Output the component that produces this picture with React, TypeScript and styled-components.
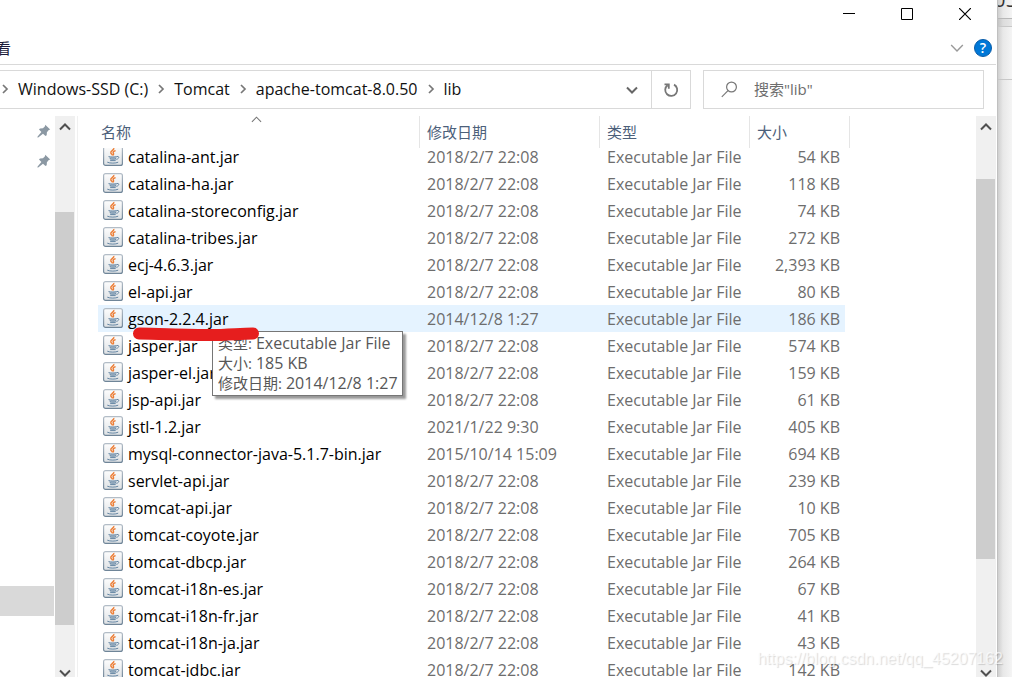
import React from "react";
import styled, { createGlobalStyle } from "styled-components";

const GlobalStyle = createGlobalStyle`
  * { box-sizing: border-box; }
  body { margin: 0; background: #fff; overflow: hidden; }
  body, button, input { font-family: "Open Sans", "Noto Sans CJK SC", sans-serif; font-size: 15px; }
  button { padding: 0; border: 0; background: transparent; display: flex; align-items: center; justify-content: center; }
  svg { display: block; flex: none; }
`;

const Desktop = styled.div`
  position: relative;
  display: flex;
  height: 100vh;
  overflow: hidden;
`;

const ExplorerWindow = styled.main`
  flex: 1;
  min-width: 0;
  display: flex;
  flex-direction: column;
  padding-right: 1px;
  background: #fff;
`;

const TitleBar = styled.header`
  display: flex;
  justify-content: flex-end;
  height: 28px;
  padding-right: 2px;
`;

const CaptionButton = styled.button`
  width: 58px;
`;

const MenuBar = styled.nav`
  display: flex;
  align-items: center;
  justify-content: space-between;
  height: 37px;
  padding: 3px 4px 0 0;
  border-bottom: 1px solid #d9d9d9;
`;

const MenuButton = styled.button`
  margin-left: -4px;
  color: #1b1b3a;
`;

const MenuTools = styled.div`
  display: flex;
  align-items: center;
  gap: 10px;
`;

const HelpButton = styled.button`
  width: 18px;
  height: 18px;
  border: 1px solid #0a5ca8;
  border-radius: 50%;
  background: #0078d7;
  color: #fff;
  font-size: 14px;
  font-weight: 600;
  line-height: 16px;
`;

const NavRow = styled.div`
  display: flex;
  gap: 12px;
  padding: 5px 12px 7px 0;
`;

const AddressBar = styled.div`
  flex: 1;
  min-width: 0;
  display: flex;
  height: 39px;
  border: 1px solid #d9d9d9;
  border-left: 0;
`;

const Crumbs = styled.div`
  flex: 1;
  display: flex;
  align-items: center;
  gap: 9px;
  padding: 0 0 1px 1px;
  font-size: 16px;
  white-space: nowrap;
`;

const Crumb = styled.a`
  color: #111;
  text-decoration: none;
`;

const BarButton = styled.button<{ $divided?: boolean }>`
  width: 39px;
  border-left: ${(p) => (p.$divided ? "1px solid #d9d9d9" : "0")};
`;

const SearchBox = styled.label`
  display: flex;
  align-items: center;
  gap: 16px;
  width: 281px;
  height: 39px;
  padding: 0 0 1px 17px;
  border: 1px solid #d9d9d9;
`;

const SearchInput = styled.input`
  flex: 1;
  min-width: 0;
  padding: 0;
  border: 0;
  outline: 0;
  background: transparent;
  &::placeholder { color: #6d6d6d; opacity: 1; }
`;

const Body = styled.div`
  flex: 1;
  min-height: 0;
  display: flex;
`;

const NavPane = styled.aside`
  width: 55px;
  display: flex;
  flex-direction: column;
  justify-content: space-between;
  padding: 8px 0 61px;
`;

const Pins = styled.div`
  display: flex;
  flex-direction: column;
  align-items: flex-end;
  gap: 16px;
  padding-right: 4px;
`;

const SelectedFolder = styled.div`
  height: 30px;
  margin-right: 1px;
  background: #d9d9d9;
`;

const ScrollTrack = styled.div`
  width: 20px;
  display: flex;
  flex-direction: column;
  background: #f0f0f0;
`;

const ScrollButton = styled.button<{ $height: number }>`
  height: ${(p) => p.$height}px;
  padding-right: 1px;
`;

const ScrollRail = styled.div<{ $before: number; $after: number }>`
  flex: 1;
  display: flex;
  padding: ${(p) => p.$before}px 1px ${(p) => p.$after}px 0;
`;

const ScrollThumb = styled.div`
  flex: 1;
  background: #cdcdcd;
`;

const FilePane = styled.section`
  flex: 1;
  min-width: 0;
  overflow: hidden;
  margin-left: 2px;
  padding-left: 20px;
  border-left: 1px solid #f0f0f0;
`;

const FileTable = styled.table`
  table-layout: fixed;
  width: 747px;
  border-collapse: collapse;
`;

const HeadCell = styled.th<{ $width: number }>`
  width: ${(p) => p.$width}px;
  height: 27px;
  padding: 0;
  vertical-align: top;
  font-weight: 400;
  text-align: left;
`;

/* The header is taller than its row and hides the top of the scrolled list. */
const HeadLabel = styled.div<{ $indent: number; $overhang?: boolean }>`
  position: relative;
  height: 32px;
  margin: 0 ${(p) => (p.$overhang ? "-5px" : "0")} -5px 0;
  padding-left: ${(p) => p.$indent}px;
  border-right: 1px solid #e5e5e5;
  background: #fff;
  color: #4c607a;
  line-height: 32px;
`;

const SortMark = styled.span`
  position: absolute;
  top: -2px;
  left: 50%;
  margin-left: -8px;
`;

const FileRow = styled.tr<{ $hot: boolean }>`
  height: 27px;
  background: ${(p) => (p.$hot ? "#e5f3ff" : "transparent")};
`;

const Cell = styled.td<{ $right?: boolean }>`
  padding: 2px 5px 0 7px;
  color: #6d6d6d;
  font-size: 16px;
  line-height: 25px;
  text-align: ${(p) => (p.$right ? "right" : "left")};
  white-space: nowrap;
`;

const NameCell = styled.td`
  padding: 0 0 0 5px;
`;

const FileName = styled.div`
  display: flex;
  align-items: flex-start;
  gap: 5px;
  height: 27px;
  padding-top: 2px;
  color: #000;
  font-size: 16px;
  line-height: 25px;
  white-space: nowrap;
  svg { margin-top: 1px; }
`;

const Tooltip = styled.dl`
  position: absolute;
  left: 212px;
  top: 331px;
  width: 191px;
  margin: 0;
  padding: 1px 5px 2px;
  border: 1px solid #767676;
  background: #fff;
  box-shadow: 3px 3px 2px rgba(0, 0, 0, 0.4);
  color: #575757;
  line-height: 20px;
  white-space: nowrap;
`;

const TipLine = styled.div`
  display: flex;
  gap: 4px;
  height: 20px;
`;

const TipTerm = styled.dt`
  font-size: 15px;
`;

const TipValue = styled.dd`
  margin: 0;
  font-size: 16px;
`;

const Marker = styled.svg`
  position: absolute;
  left: 130px;
  top: 322px;
`;

const Watermark = styled.div`
  position: absolute;
  right: 9px;
  bottom: 8px;
  color: rgba(255, 255, 255, 0.7);
  font-family: "Liberation Sans", sans-serif;
  font-size: 16px;
  line-height: 20px;
  text-shadow: 1px 1px 1px rgba(0, 0, 0, 0.15);
`;

const BehindWindow = styled.div`
  width: 15px;
  overflow: hidden;
  border-left: 1px solid #c0c0c0;
  background: linear-gradient(to right, #cfcfcf, #e8e8e8 5px, #f6f6f6 15px);
`;

const BehindTab = styled.div`
  height: 19px;
  border-bottom: 1px solid #b8b8b8;
  color: #333;
  font-size: 20px;
  line-height: 0;
  text-indent: -4px;
`;

const BehindBar = styled.div<{ $height: number; $shade?: boolean }>`
  height: ${(p) => p.$height}px;
  border-bottom: 1px solid #c8c8c8;
  background: ${(p) => (p.$shade ? "rgba(0, 0, 0, 0.05)" : "transparent")};
`;

const Chevron = ({ up, size = 12, width = 2, color = "#505050" }: { up?: boolean; size?: number; width?: number; color?: string }) => (
  <svg width={size} height={size} viewBox="0 0 12 12" fill="none" stroke={color} strokeWidth={width}>
    <path d={up ? "M1 8.5 6 3.5l5 5" : "M1 3.5l5 5 5-5"} />
  </svg>
);

const CrumbArrow = () => (
  <svg width="8" height="12" viewBox="0 0 8 12" fill="none" stroke="#777" strokeWidth="1.7">
    <path d="M2 2l4 4-4 4" />
  </svg>
);

const PinIcon = () => (
  <svg width="14" height="14" viewBox="0 0 14 14" fill="#8b98a3">
    <path d="M8.2.8 13.2 5.6 11.8 6 9.9 8.2 9.7 11.2 8.5 12 6 9.7 1.2 13.6.4 13.4.6 12.4 4.4 8.1 2 5.6 3 4.4 6 4.2 8 2.2z" />
  </svg>
);

const JarIcon = () => (
  <svg width="20" height="20" viewBox="0 0 20 20" fill="none">
    <defs>
      <linearGradient id="jar" x1="0" y1="0" x2="0" y2="1">
        <stop offset="0" stopColor="#fdfdfd" />
        <stop offset="1" stopColor="#dde1e4" />
      </linearGradient>
      <linearGradient id="rim" x1="0" y1="0" x2="0" y2="1">
        <stop offset="0" stopColor="#b3bdc7" />
        <stop offset="1" stopColor="#6f8598" />
      </linearGradient>
    </defs>
    <rect x=".6" y=".6" width="18.8" height="18.8" rx="2" fill="url(#jar)" stroke="url(#rim)" strokeWidth="1.2" />
    <path d="M10.8 2c1 2-3.800 2.800-3 5 .3.900 1.600 1.200 1.700 2.500M12.600 4.600c-2 .6-3 1.400-2.300 2.400.6.900.4 1.600-.2 2.300" stroke="#ec7d35" strokeWidth="1.400" />
    <path d="M6 10.600h7.800l-.8 4H7.400z" fill="#b9c7d3" />
    <path d="M5.500 10.600c2 .7 6.500.7 8.300 0M6.800 12.600c2 .6 4.400.6 6.200 0M7.200 14.600h5.400M4.300 16.200c2.500 1.200 8.500 1.200 10.900 0M14 10.500c2.600-.6 2.300 2.300-.6 2.900" stroke="#6485a3" strokeWidth="1" />
  </svg>
);

const D = "2018/2/7 22:08";
const files: [string, string, string][] = [
  ["catalina-ant.jar", D, "54 KB"],
  ["catalina-ha.jar", D, "118 KB"],
  ["catalina-storeconfig.jar", D, "74 KB"],
  ["catalina-tribes.jar", D, "272 KB"],
  ["ecj-4.6.3.jar", D, "2,393 KB"],
  ["el-api.jar", D, "80 KB"],
  ["gson-2.2.4.jar", "2014/12/8 1:27", "186 KB"],
  ["jasper.jar", D, "574 KB"],
  ["jasper-el.jar", D, "159 KB"],
  ["jsp-api.jar", D, "61 KB"],
  ["jstl-1.2.jar", "2021/1/22 9:30", "405 KB"],
  ["mysql-connector-java-5.1.7-bin.jar", "2015/10/14 15:09", "694 KB"],
  ["servlet-api.jar", D, "239 KB"],
  ["tomcat-api.jar", D, "10 KB"],
  ["tomcat-coyote.jar", D, "705 KB"],
  ["tomcat-dbcp.jar", D, "264 KB"],
  ["tomcat-i18n-es.jar", D, "67 KB"],
  ["tomcat-i18n-fr.jar", D, "41 KB"],
  ["tomcat-i18n-ja.jar", D, "43 KB"],
  ["tomcat-jdbc.jar", D, "142 KB"],
];

const path = ["Windows-SSD (C:)", "Tomcat", "apache-tomcat-8.0.50", "lib"];

const details = [
  ["类型:", "Executable Jar File"],
  ["大小:", "185 KB"],
  ["修改日期:", "2014/12/8 1:27"],
];

const ScrollBar = ({ before, after }: { before: number; after: number }) => (
  <ScrollTrack>
    <ScrollButton $height={22} aria-label="Scroll up"><Chevron up /></ScrollButton>
    <ScrollRail $before={before} $after={after}><ScrollThumb /></ScrollRail>
    <ScrollButton $height={8} aria-label="Scroll down"><Chevron /></ScrollButton>
  </ScrollTrack>
);

export default function App() {
  return (
    <Desktop>
      <GlobalStyle />
      <ExplorerWindow>
        <TitleBar>
          <CaptionButton aria-label="Minimize">
            <svg width="12" height="12" stroke="#000"><path d="M0 5.500h12" /></svg>
          </CaptionButton>
          <CaptionButton aria-label="Maximize">
            <svg width="12" height="12" fill="none" stroke="#000"><path d="M.5.5h11v11H.5z" /></svg>
          </CaptionButton>
          <CaptionButton aria-label="Close">
            <svg width="12" height="12" stroke="#000" strokeWidth="1.2"><path d="M0 0l12 12M12 0L0 12" /></svg>
          </CaptionButton>
        </TitleBar>
        <MenuBar>
          <MenuButton>看</MenuButton>
          <MenuTools>
            <button aria-label="Expand ribbon"><Chevron size={14} width={1.2} color="#999" /></button>
            <HelpButton aria-label="Help">?</HelpButton>
          </MenuTools>
        </MenuBar>
        <NavRow>
          <AddressBar>
            <Crumbs>
              {path.map((p) => (
                <React.Fragment key={p}>
                  <CrumbArrow />
                  <Crumb href="#">{p}</Crumb>
                </React.Fragment>
              ))}
            </Crumbs>
            <BarButton aria-label="Recent locations"><Chevron color="#666" /></BarButton>
            <BarButton $divided aria-label="Refresh">
              <svg width="16" height="16" viewBox="0 0 16 16" fill="none" stroke="#777" strokeWidth="1.8">
                <path d="M11 2.600A6 6 0 1 1 4.500 3.200M1.500 2.400h4.300v4.300" />
              </svg>
            </BarButton>
          </AddressBar>
          <SearchBox>
            <svg width="17" height="17" viewBox="0 0 17 17" fill="none" stroke="#777" strokeWidth="1.2">
              <circle cx="10.500" cy="6" r="4.900" /><path d="M7 9.600.8 15.800" />
            </svg>
            <SearchInput aria-label="Search" placeholder={'搜索"lib"'} />
          </SearchBox>
        </NavRow>
        <Body>
          <NavPane>
            <Pins><PinIcon /><PinIcon /></Pins>
            <SelectedFolder />
          </NavPane>
          <ScrollBar before={74} after={44} />
          <FilePane>
            <FileTable>
              <thead>
                <tr>
                  <HeadCell $width={322}>
                    <HeadLabel $indent={3}>名称<SortMark><Chevron up size={11} width={1.2} color="#777" /></SortMark></HeadLabel>
                  </HeadCell>
                  <HeadCell $width={180}><HeadLabel $indent={7}>修改日期</HeadLabel></HeadCell>
                  <HeadCell $width={150}><HeadLabel $indent={7}>类型</HeadLabel></HeadCell>
                  <HeadCell $width={95}><HeadLabel $indent={7} $overhang>大小</HeadLabel></HeadCell>
                </tr>
              </thead>
              <tbody>
                {files.map(([name, date, size]) => (
                  <FileRow key={name} $hot={name === "gson-2.2.4.jar"}>
                    <NameCell><FileName><JarIcon />{name}</FileName></NameCell>
                    <Cell>{date}</Cell>
                    <Cell>Executable Jar File</Cell>
                    <Cell $right>{size}</Cell>
                  </FileRow>
                ))}
              </tbody>
            </FileTable>
          </FilePane>
          <ScrollBar before={41} after={110} />
        </Body>
      </ExplorerWindow>
      <BehindWindow>
        <BehindTab>05</BehindTab>
        <BehindBar $height={8} $shade />
        <BehindBar $height={53} />
      </BehindWindow>
      <Tooltip role="tooltip">
        {details.map(([term, value]) => (
          <TipLine key={term}><TipTerm>{term}</TipTerm><TipValue>{value}</TipValue></TipLine>
        ))}
      </Tooltip>
      <Marker width="132" height="24" fill="none" stroke="#e61e1e" strokeWidth="12" strokeLinecap="round" strokeLinejoin="round">
        <path d="M9 11.500C35 12 60 13 80 13c18 0 30-1.500 43-1.500" />
      </Marker>
      <Watermark>https://blog.csdn.net/qq_45207162</Watermark>
    </Desktop>
  );
}
